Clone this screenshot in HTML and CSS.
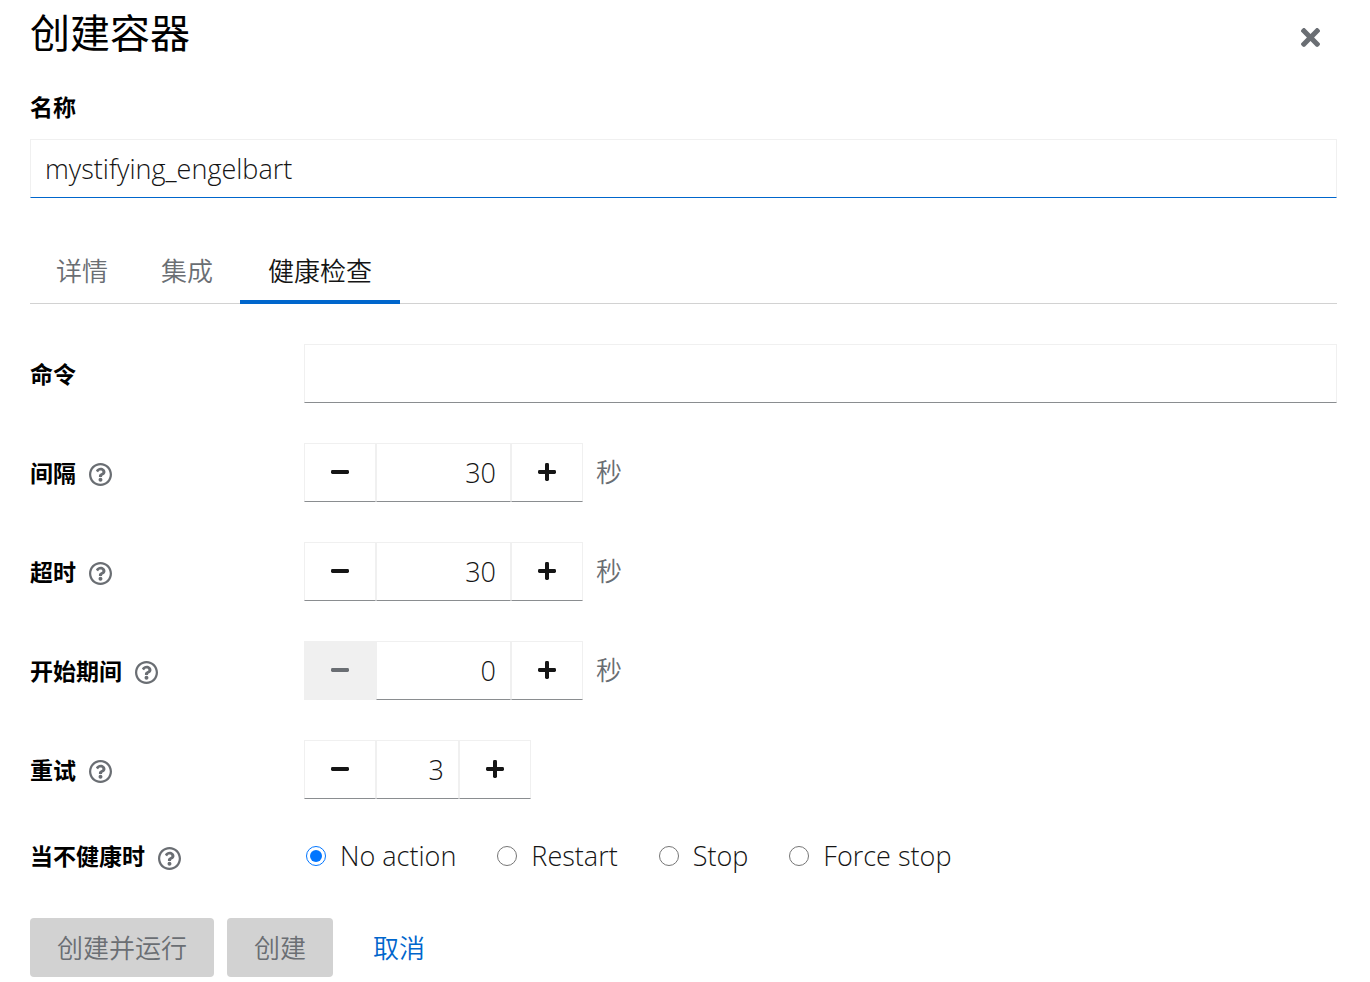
FILE: index.html
```html
<!DOCTYPE html>
<html lang="zh-CN">
<head>
    <meta charset="UTF-8">
    <meta name="viewport" content="width=device-width, initial-scale=1.0">
    <title>创建容器</title>
    <link rel="stylesheet" href="styles.css">
</head>
<body>
    <svg class="sprite" aria-hidden="true">
        <symbol id="icon-help" viewBox="8 8 496 496">
            <path d="M256 8C119.043 8 8 119.083 8 256c0 136.997 111.043 248 248 248s248-111.003 248-248C504 119.083 392.957 8 256 8zm0 448c-110.532 0-200-89.431-200-200 0-110.495 89.472-200 200-200 110.491 0 200 89.471 200 200 0 110.53-89.431 200-200 200zm107.244-255.2c0 67.052-72.421 68.084-72.421 92.863V300c0 6.627-5.373 12-12 12h-45.647c-6.627 0-12-5.373-12-12v-8.659c0-35.745 27.1-50.034 47.579-61.516 17.561-9.845 28.324-16.541 28.324-29.579 0-17.246-21.999-28.693-39.784-28.693-23.189 0-33.894 10.977-48.942 29.969-4.057 5.12-11.46 6.071-16.666 2.124l-27.824-21.098c-5.107-3.872-6.251-11.066-2.644-16.363C184.846 131.491 214.94 112 261.794 112c49.071 0 101.45 38.304 101.45 88.8zM298 368c0 23.159-18.841 42-42 42s-42-18.841-42-42 18.841-42 42-42 42 18.841 42 42z"/>
        </symbol>
        <symbol id="icon-minus" viewBox="0 0 18 18">
            <rect x="0" y="7" width="18" height="4" rx="1.4"/>
        </symbol>
        <symbol id="icon-plus" viewBox="0 0 18 18">
            <rect x="0" y="7" width="18" height="4" rx="1.4"/>
            <rect x="7" y="0" width="4" height="18" rx="1.4"/>
        </symbol>
        <symbol id="icon-close" viewBox="0 80 352 352">
            <path d="M242.72 256l100.07-100.07c12.28-12.28 12.28-32.19 0-44.48l-22.24-22.24c-12.28-12.28-32.19-12.28-44.48 0L176 189.28 75.93 89.21c-12.28-12.28-32.19-12.28-44.48 0L9.21 111.45c-12.28 12.28-12.28 32.19 0 44.48L109.28 256 9.21 356.07c-12.28 12.28-12.28 32.19 0 44.48l22.24 22.24c12.28 12.28 32.2 12.28 44.48 0L176 322.72l100.07 100.07c12.28 12.28 32.2 12.28 44.48 0l22.24-22.24c12.28-12.28 12.28-32.19 0-44.48L242.72 256z"/>
        </symbol>
    </svg>

    <form class="modal">
        <header class="modal-header">
            <h1>创建容器</h1>
            <button type="button" class="close" aria-label="关闭"><svg><use href="#icon-close"/></svg></button>
        </header>

        <label class="label name-label" for="name">名称</label>
        <input class="text-input is-active" type="text" id="name" value="mystifying_engelbart">

        <div class="tabs" role="tablist">
            <button type="button" class="tab" role="tab">详情</button>
            <button type="button" class="tab" role="tab">集成</button>
            <button type="button" class="tab current" role="tab" aria-selected="true">健康检查</button>
        </div>

        <div class="fields">
            <div class="field">
                <div class="field-label">
                    <label class="label" for="command">命令</label>
                </div>
                <input class="text-input" type="text" id="command">
            </div>

            <div class="field">
                <div class="field-label">
                    <label class="label" for="interval">间隔</label>
                    <button type="button" class="help" aria-label="帮助"><svg><use href="#icon-help"/></svg></button>
                </div>
                <div class="number">
                    <button type="button" class="step" aria-label="减少"><svg><use href="#icon-minus"/></svg></button>
                    <input class="text-input number-input" type="text" inputmode="numeric" id="interval" value="30">
                    <button type="button" class="step" aria-label="增加"><svg><use href="#icon-plus"/></svg></button>
                    <span class="unit">秒</span>
                </div>
            </div>

            <div class="field">
                <div class="field-label">
                    <label class="label" for="timeout">超时</label>
                    <button type="button" class="help" aria-label="帮助"><svg><use href="#icon-help"/></svg></button>
                </div>
                <div class="number">
                    <button type="button" class="step" aria-label="减少"><svg><use href="#icon-minus"/></svg></button>
                    <input class="text-input number-input" type="text" inputmode="numeric" id="timeout" value="30">
                    <button type="button" class="step" aria-label="增加"><svg><use href="#icon-plus"/></svg></button>
                    <span class="unit">秒</span>
                </div>
            </div>

            <div class="field">
                <div class="field-label">
                    <label class="label" for="start-period">开始期间</label>
                    <button type="button" class="help" aria-label="帮助"><svg><use href="#icon-help"/></svg></button>
                </div>
                <div class="number">
                    <button type="button" class="step" aria-label="减少" disabled><svg><use href="#icon-minus"/></svg></button>
                    <input class="text-input number-input" type="text" inputmode="numeric" id="start-period" value="0">
                    <button type="button" class="step" aria-label="增加"><svg><use href="#icon-plus"/></svg></button>
                    <span class="unit">秒</span>
                </div>
            </div>

            <div class="field">
                <div class="field-label">
                    <label class="label" for="retries">重试</label>
                    <button type="button" class="help" aria-label="帮助"><svg><use href="#icon-help"/></svg></button>
                </div>
                <div class="number">
                    <button type="button" class="step" aria-label="减少"><svg><use href="#icon-minus"/></svg></button>
                    <input class="text-input number-input short" type="text" inputmode="numeric" id="retries" value="3">
                    <button type="button" class="step" aria-label="增加"><svg><use href="#icon-plus"/></svg></button>
                </div>
            </div>

            <div class="field" role="radiogroup" aria-labelledby="unhealthy">
                <div class="field-label">
                    <span class="label" id="unhealthy">当不健康时</span>
                    <button type="button" class="help" aria-label="帮助"><svg><use href="#icon-help"/></svg></button>
                </div>
                <div class="radios">
                    <label class="radio"><input type="radio" name="action" checked>No action</label>
                    <label class="radio"><input type="radio" name="action">Restart</label>
                    <label class="radio"><input type="radio" name="action">Stop</label>
                    <label class="radio"><input type="radio" name="action">Force stop</label>
                </div>
            </div>
        </div>

        <footer class="modal-footer">
            <button type="submit" class="btn" disabled>创建并运行</button>
            <button type="submit" class="btn" disabled>创建</button>
            <button type="button" class="btn btn-link">取消</button>
        </footer>
    </form>
</body>
</html>
```

FILE: styles.css
```css
* {
    box-sizing: border-box;
}
body {
    margin: 0;
    background-color: #fff;
    color: #151515;
}
body,
button,
input {
    font-family: "Open Sans", "Noto Sans CJK SC", sans-serif;
    font-size: 26px;
    font-weight: 350;
    line-height: 34px;
}
button {
    padding: 0;
    border: none;
    background: none;
    color: inherit;
    cursor: pointer;
}
button:disabled {
    cursor: default;
}
svg {
    display: block;
    fill: currentColor;
}
.sprite {
    position: absolute;
    width: 0;
    height: 0;
}
.modal {
    padding: 8px 33px 5px 30px;
}

/* Header */
.modal-header {
    display: flex;
    justify-content: space-between;
    align-items: flex-start;
    margin-bottom: 32px;
}
h1 {
    margin: 0;
    color: #000;
    font-size: 40px;
    font-weight: 400;
    line-height: 50px;
}
.close {
    padding: 20px 17px 0;
    color: #6a6e73;
}
.close svg {
    width: 19px;
    height: 19px;
}

/* Inputs */
.label {
    color: #000;
    font-size: 23px;
    font-weight: 700;
}
.name-label {
    display: block;
    margin-bottom: 15px;
}
.text-input {
    display: block;
    width: 100%;
    height: 59px;
    padding: 0 14px;
    border: 1px solid #f0f0f0;
    border-bottom-color: #8a8d90;
    border-radius: 0;
    background-color: #fff;
    color: #151515;
    font-size: 27px;
    font-weight: 300;
    outline: none;
}
.text-input.is-active,
.text-input:focus {
    border-bottom-color: #06c;
}

/* Tabs */
.tabs {
    display: flex;
    margin: 40px 0;
    box-shadow: inset 0 -1px #d2d2d2;
}
.tab {
    height: 66px;
    padding: 0 27px 0 26px;
    color: #6a6e73;
}
.tab.current {
    padding: 0 28px;
    color: #151515;
    box-shadow: inset 0 -4px #06c;
}

/* Health check fields */
.fields {
    display: grid;
    gap: 40px;
}
.field {
    display: grid;
    grid-template-columns: 260px 1fr;
    gap: 14px;
    align-items: center;
}
.field-label {
    display: flex;
    align-items: center;
    gap: 13px;
}
.help {
    padding-top: 4px;
    color: #6a6e73;
}
.help svg {
    width: 23px;
    height: 23px;
}
.number {
    display: flex;
    align-items: center;
}
.number-input {
    width: 135px;
    text-align: right;
}
.number-input.short {
    width: 83px;
}
.step {
    display: flex;
    align-items: center;
    justify-content: center;
    width: 72px;
    height: 59px;
    padding-bottom: 2px;
    border: 1px solid #f0f0f0;
    border-bottom-color: #8a8d90;
}
.step:disabled {
    border-color: #f0f0f0;
    background-color: #f0f0f0;
    color: #6a6e73;
}
.step svg {
    width: 18px;
    height: 18px;
}
.unit {
    margin-left: 13px;
    padding-bottom: 2px;
    color: #6a6e73;
}
.radios {
    display: flex;
    flex-wrap: wrap;
    gap: 41px;
    padding-left: 2px;
    font-size: 27px;
    font-weight: 300;
}
.radio {
    display: flex;
    align-items: center;
    gap: 14px;
}
.radio input {
    width: 20px;
    height: 20px;
    margin: 0;
}

/* Footer */
.modal-footer {
    display: flex;
    gap: 13px;
    margin-top: 45px;
}
.btn {
    height: 59px;
    padding: 0 27px;
    border-radius: 4px;
}
.btn:disabled {
    background-color: #d2d2d2;
    color: #6a6e73;
}
.btn-link {
    color: #06c;
}
```
